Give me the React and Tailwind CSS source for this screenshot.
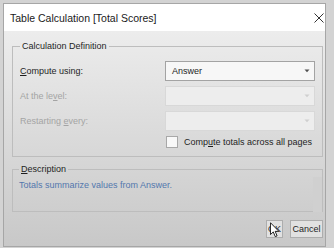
import React from 'react';

function Arrow({ disabled }) {
  return (
    <svg width="6" height="4" viewBox="0 0 6 4" className="shrink-0">
      <path d="M0.5 0.5 L5.5 0.5 L3 3.2 Z" fill={disabled ? '#cfcfcf' : '#505050'} />
    </svg>
  );
}

function Select({ value, disabled }) {
  return (
    <div
      className={`w-[150px] h-[20px] flex items-center justify-between pl-[6px] pr-[4px] border ${
        disabled ? 'border-[#d8d8d8] bg-[#ededed]' : 'border-[#a3a3a3] bg-[#f7f7f7]'
      }`}
    >
      <span className="text-[#1e1e1e]">{value}</span>
      <Arrow disabled={disabled} />
    </div>
  );
}

export default function App() {
  return (
    <div className="w-[334px] h-[248px] bg-[#d3d3d3] pt-[3px] pl-[3px] overflow-hidden font-['Liberation_Sans',Arial,sans-serif] text-[9px] leading-[14px]">
      <div className="w-[323px] h-[244px] border border-[#a6a6a6] flex flex-col bg-linear-to-b from-[#f1f1f1] to-[#c8c8c8]">
        {/* Title bar */}
        <div className="h-[27px] shrink-0 bg-white flex items-center justify-between pl-[6px] pr-[1px]">
          <span className="text-[10.5px] text-[#1a1a1a]">Table Calculation [Total Scores]</span>
          <svg width="10" height="10" viewBox="0 0 10 10">
            <path d="M0.5 0.5 L9.5 9.5 M9.5 0.5 L0.5 9.5" stroke="#333" strokeWidth="1" />
          </svg>
        </div>

        <div className="pl-[8px] pr-[2px] pt-[8px] flex flex-col">
          {/* Calculation Definition */}
          <fieldset className="border border-[#bdbdbd] px-[7px] pb-[8px] pt-[8px]">
            <legend className="ml-[0px] px-[2px] text-[#1e1e1e]">Calculation Definition</legend>
            <div className="flex flex-col gap-[5px]">
              <div className="flex items-center justify-between">
                <span className="text-[#1e1e1e]">
                  <span className="underline">C</span>ompute using:
                </span>
                <Select value="Answer" />
              </div>
              <div className="flex items-center justify-between">
                <span className="text-[#a4a4a4]">
                  At the le<span className="underline">v</span>el:
                </span>
                <Select value="" disabled />
              </div>
              <div className="flex items-center justify-between">
                <span className="text-[#a4a4a4]">
                  Restarting <span className="underline">e</span>very:
                </span>
                <Select value="" disabled />
              </div>
              <div className="flex items-center justify-end">
                <div className="w-[150px] flex items-center gap-[6px] h-[12px]">
                  <div className="w-[12px] h-[12px] border border-[#a8a8a8] bg-[#f8f8f8] ml-[1px]" />
                  <span className="text-[#1e1e1e]">
                    Comp<span className="underline">u</span>te totals across all pages
                  </span>
                </div>
              </div>
            </div>
          </fieldset>

          {/* Description */}
          <fieldset className="mt-[5px] border border-[#bdbdbd] px-0 pb-0">
            <legend className="px-[2px] ml-[6px] text-[#1e1e1e]">
              <span className="underline">D</span>escription
            </legend>
            <div className="h-[35px] flex justify-between">
              <span className="pl-[6px] pt-[2px] text-[#5377ad]">Totals summarize values from Answer.</span>
              <div className="w-[9px] h-full mt-[1px] bg-[#d0d0d0]" />
            </div>
          </fieldset>

          {/* Buttons */}
          <div className="mt-[8px] flex justify-end gap-[7px]">
            <div className="relative w-[17px] h-[18px] border border-[#adadad] bg-[#e1e1e1] flex items-center justify-center text-[#1e1e1e]">
              OK
              <svg
                className="absolute left-[3px] top-[1px]"
                width="10"
                height="16"
                viewBox="0 0 11 17"
              >
                <path
                  d="M0.5 0.5 L0.5 13.5 L3.6 10.6 L5.8 15.8 L7.8 15 L5.7 10 L9.8 10 Z"
                  fill="#ffffff"
                  stroke="#111"
                  strokeWidth="1"
                  strokeLinejoin="round"
                />
              </svg>
            </div>
            <div className="w-[33px] h-[18px] border border-[#adadad] bg-[#e1e1e1] flex items-center justify-center text-[#1e1e1e]">
              Cancel
            </div>
          </div>
        </div>
      </div>
    </div>
  );
}
